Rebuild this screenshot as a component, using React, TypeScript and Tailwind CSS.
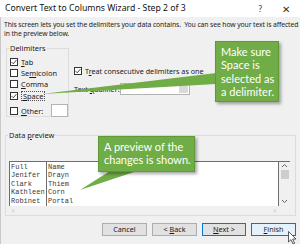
import React from "react";

const ui = { fontFamily: '"Noto Sans", "Open Sans", sans-serif' };
const callout = { fontFamily: 'Lato, "Open Sans", sans-serif' };
const mono = { fontFamily: '"Liberation Mono", monospace' };

function Check({ checked }: { checked?: boolean }) {
  return (
    <span className="flex h-[8px] w-[8px] shrink-0 items-center justify-center border border-[#333333] bg-white">
      {checked ? (
        <svg width="6" height="6" viewBox="0 0 6 6">
          <path d="M0.6 3.1 L2.3 4.8 L5.4 1.1" fill="none" stroke="#333333" strokeWidth="0.9" />
        </svg>
      ) : null}
    </span>
  );
}

function U({ children }: { children: React.ReactNode }) {
  return <span className="underline underline-offset-1">{children}</span>;
}

const rows: [string, string][] = [
  ["Full", "Name"],
  ["Jenifer", "Drayn"],
  ["Clark", "Thiem"],
  ["Kathleen", "Corn"],
  ["Robinet", "Portal"],
];

export default function App() {
  return (
    <div className="relative h-[244px] w-[300px] overflow-hidden bg-[#f0f0f0] text-[#1a1a1a]" style={ui}>
      {/* title bar */}
      <div className="flex h-[17px] items-center bg-white pl-[5px] pr-[10px] text-[8.7px] text-[#111111]">
        <span className="flex-1">Convert Text to Columns Wizard - Step 2 of 3</span>
        <span className="mr-[20px] text-[8px] text-[#333333]">?</span>
        <span className="text-[10px] leading-none text-[#333333]">✕</span>
      </div>

      <div className="flex h-[227px] flex-col border-l border-[#c8c8c8] pl-[3px]">
        <p className="mt-[4px] whitespace-nowrap text-[6.8px] leading-[8.5px] tracking-[-0.1px] text-[#222222]">
          This screen lets you set the delimiters your data contains.&nbsp; You can see how your text is affected
          <br />
          in the preview below.
        </p>

        <div className="mt-[6px] flex">
          {/* delimiters */}
          <div className="relative ml-[2px] mt-[4px] h-[69px] w-[63px] border border-[#dcdcdc]">
            <span className="absolute -top-[6px] left-[2px] bg-[#f0f0f0] px-[1px] text-[7.4px] leading-[10px]">Delimiters</span>
            <div className="mt-[9px] flex flex-col gap-[3px] pl-[3px] text-[7.4px] leading-[8px]">
              <div className="flex items-center gap-[3px]"><Check checked /><span><U>T</U>ab</span></div>
              <div className="flex items-center gap-[3px]"><Check /><span>Se<U>m</U>icolon</span></div>
              <div className="flex items-center gap-[3px]"><Check /><span><U>C</U>omma</span></div>
              <div className="flex items-center gap-[3px]">
                <Check checked />
                <span className="border border-dotted border-[#555555] px-[1px]"><U>S</U>pace</span>
              </div>
              <div className="flex items-center gap-[3px]">
                <Check />
                <span><U>O</U>ther:</span>
                <span className="ml-[5px] h-[13px] w-[18px] border border-[#b4b4b4] bg-white" />
              </div>
            </div>
          </div>

          {/* right options */}
          <div className="ml-[5px] flex flex-col pt-[23px] text-[7.2px] leading-[8px]">
            <div className="flex items-center gap-[3px]">
              <Check checked />
              <span>T<U>r</U>eat consecutive delimiters as one</span>
            </div>
            <div className="mt-[8px] flex items-center">
              <span className="w-[46px]">Text <U>q</U>ualifier:</span>
              <span className="flex h-[12px] w-[70px] items-center justify-end border border-[#b4b4b4] bg-white pr-[1px]">
                <span className="h-[8px] w-[9px] bg-[#dadada]" />
              </span>
            </div>
          </div>
        </div>

        {/* data preview */}
        <div className="relative ml-[1px] mr-[4px] mt-[18px] h-[81px] border border-[#dcdcdc]">
          <span className="absolute -top-[6px] left-[2px] bg-[#f0f0f0] px-[1px] text-[7.4px] leading-[10px]">
            Data <U>p</U>review
          </span>
          <div className="ml-[3px] mt-[25px] flex">
            <div className="flex flex-col">
              <div className="relative flex h-[45px] w-[270px] border-l border-r border-t border-[#6e6e6e] bg-white" style={mono}>
                <div className="flex w-[37px] flex-col border-r border-[#6e6e6e] pl-[1px] pt-[1px] text-[7px] leading-[8.4px] text-[#3a3a3a]">
                  {rows.map(([a]) => (
                    <span key={a}>{a}</span>
                  ))}
                </div>
                <div className="flex flex-col pl-[1px] pt-[1px] text-[7px] leading-[8.4px] text-[#3a3a3a]">
                  {rows.map(([, b]) => (
                    <span key={b}>{b}</span>
                  ))}
                </div>
              </div>
              <div className="flex h-[9px] items-center justify-between px-[3px] text-[7px] leading-none text-[#b0b0b0]">
                <span>‹</span>
                <span>›</span>
              </div>
            </div>
            <div className="flex h-[45px] w-[11px] flex-col items-center border-t border-[#6e6e6e] pt-[1px]">
              <svg width="7" height="5" viewBox="0 0 7 5"><path d="M1 4 L3.5 1.5 L6 4" fill="none" stroke="#555" strokeWidth="0.9" /></svg>
              <span className="mt-[2px] h-[9px] w-[8px] bg-[#cdcdcd]" />
              <span className="flex-1" />
              <svg width="7" height="5" viewBox="0 0 7 5" className="mb-[2px]"><path d="M1 1 L3.5 3.5 L6 1" fill="none" stroke="#555" strokeWidth="0.9" /></svg>
            </div>
          </div>
        </div>

        {/* buttons */}
        <div className="mt-[7px] flex justify-end gap-[5px] pr-[4px] text-[7.2px]">
          <button className="h-[13px] w-[45px] border border-[#adadad] bg-[#e1e1e1] leading-none">Cancel</button>
          <button className="h-[13px] w-[45px] border border-[#adadad] bg-[#e1e1e1] leading-none">&lt; <U>B</U>ack</button>
          <button className="h-[13px] w-[44px] border border-[#0078d7] bg-[#e1e1e1] leading-none"><U>N</U>ext &gt;</button>
          <button className="h-[13px] w-[45px] border border-[#0078d7] bg-[#e5f1fb] leading-none"><U>F</U>inish</button>
        </div>
      </div>

      {/* callout tails */}
      <svg className="absolute left-0 top-0" width="300" height="244" viewBox="0 0 300 244">
        <polygon points="42,94 216,73 216,84" fill="#70ad47" />
        <polygon points="110,171 80,190 137,171" fill="#70ad47" />
      </svg>
      <div
        className="absolute left-[215px] top-[41px] h-[61px] w-[64px] border border-[#5f9a3a] bg-[#70ad47] pl-[5px] pt-[3px] text-[11px] leading-[13.3px] text-white shadow-[2px_2px_3px_rgba(0,0,0,0.35)]"
        style={callout}
      >
        Make sure<br />Space is<br />selected as<br />a delimiter.
      </div>
      <div
        className="absolute left-[98px] top-[136px] h-[36px] w-[97px] border border-[#5f9a3a] bg-[#70ad47] pl-[5px] pt-[3px] text-[11px] leading-[13px] text-white shadow-[2px_2px_3px_rgba(0,0,0,0.35)]"
        style={callout}
      >
        A preview of the<br />changes is shown.
      </div>

      {/* cursor */}
      <svg className="absolute left-[288px] top-[231px]" width="10" height="14" viewBox="0 0 10 14">
        <path d="M0.5 0.5 L0.5 11 L3 8.6 L5 13 L6.6 12.3 L4.7 8 L8 8 Z" fill="white" stroke="#333" strokeWidth="0.8" />
      </svg>
    </div>
  );
}
